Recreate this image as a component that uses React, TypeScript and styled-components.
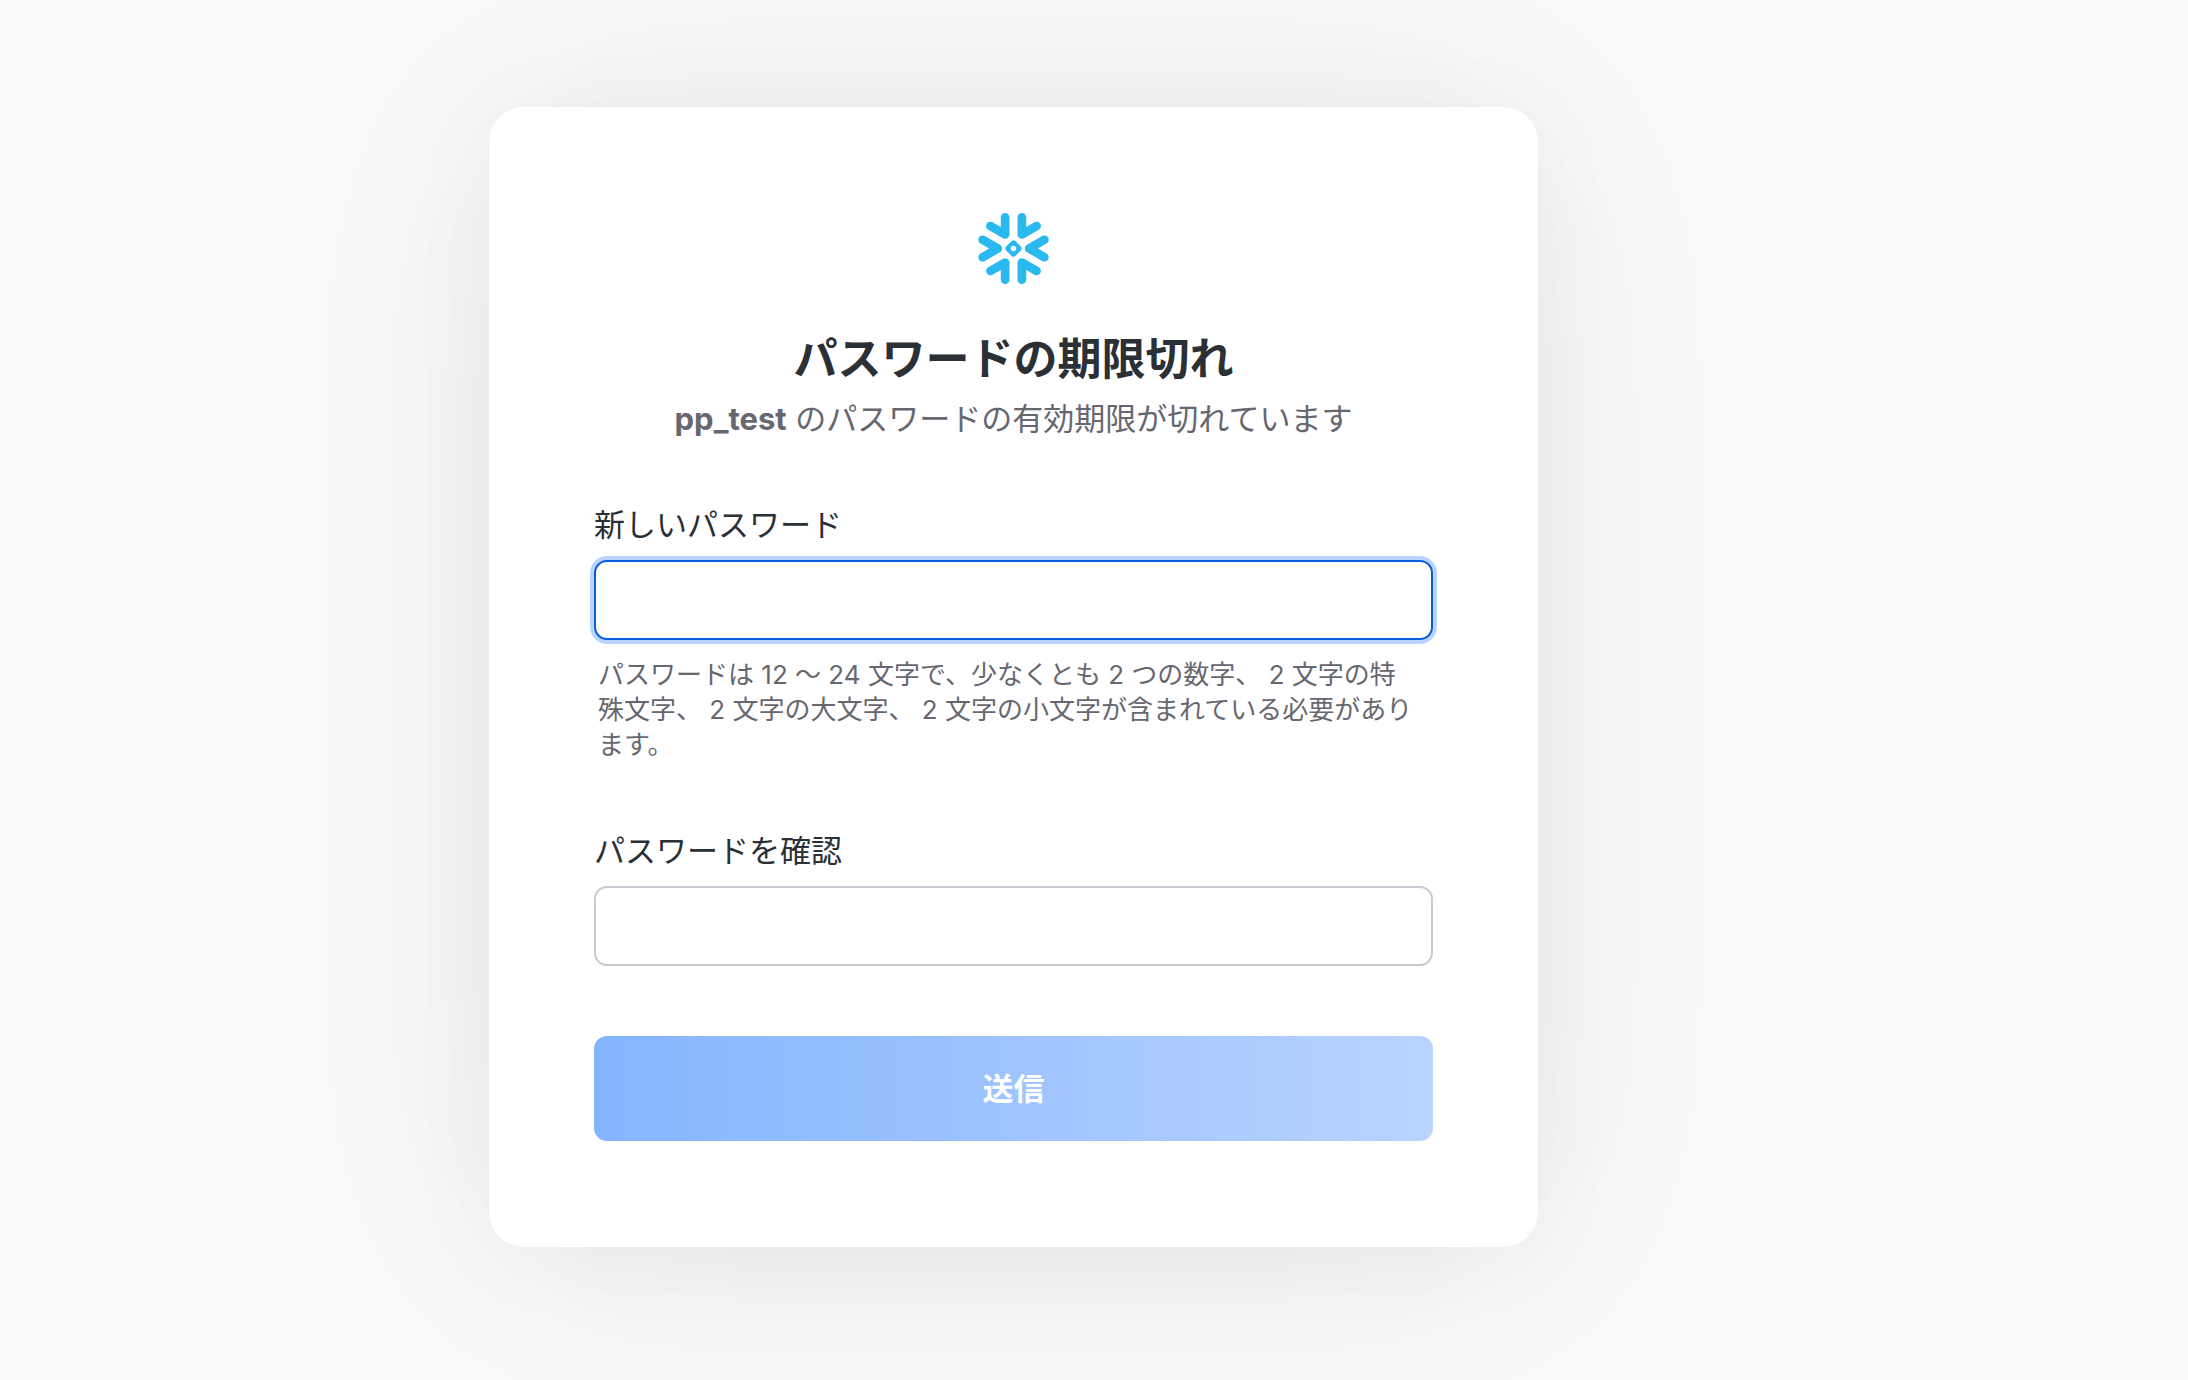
import React, { useState } from "react";
import styled, { createGlobalStyle, css } from "styled-components";

const GlobalStyle = createGlobalStyle`
  *, *::before, *::after {
    box-sizing: border-box;
  }

  body {
    margin: 0;
    background: #fafafa;
    color: #2b2f36;
    font-family: Inter, "Noto Sans CJK JP", sans-serif;
    font-size: 31px;
    line-height: 44px;
  }
`;

const Page = styled.main`
  display: flex;
  justify-content: center;
  min-height: 100vh;
  padding: 107px 161px 107px 0;
  overflow: hidden;
`;

const Card = styled.section`
  align-self: flex-start;
  width: 100%;
  max-width: 1049px;
  padding: 106px 105px;
  border-radius: 35px;
  background: #fff;
  box-shadow:
    0 9px 110px rgba(0, 0, 0, 0.03),
    0 9px 262px rgba(0, 0, 0, 0.085);
`;

const Header = styled.header`
  display: flex;
  flex-direction: column;
  align-items: center;
  text-align: center;
`;

const Logo = styled.svg`
  display: block;
  width: 71px;
  height: 71px;
`;

const Title = styled.h1`
  margin: 49px 0 12px;
  font-size: 44px;
  font-weight: 700;
  line-height: 52px;
`;

const Subtitle = styled.p`
  margin: 0;
  color: #66676f;

  strong {
    font-weight: 700;
  }
`;

const Form = styled.form`
  display: flex;
  flex-direction: column;
  gap: 70px;
  margin-top: 62px;
`;

const Field = styled.div`
  display: flex;
  flex-direction: column;
`;

const FieldSet = styled.div`
  display: flex;
  flex-direction: column;
  gap: 67px;
`;

const Label = styled.label`
  margin-bottom: 13px;
`;

const activeRing = css`
  border-color: #0b5cdc;
  box-shadow: 0 0 0 4px #b8d4ff;
`;

const Input = styled.input<{ $active?: boolean }>`
  width: 100%;
  height: 80px;
  padding: 0 24px;
  border: 2px solid #c9cad1;
  border-radius: 13px;
  outline: none;
  background: #fff;
  color: inherit;
  font: inherit;

  ${({ $active }) => $active && activeRing}

  &:focus {
    ${activeRing}
  }
`;

const Hint = styled.p`
  margin: 17px 0 0;
  padding: 0 14px 0 4px;
  color: #66676f;
  font-size: 26px;
  line-height: 35px;
`;

const SubmitButton = styled.button`
  width: 100%;
  height: 105px;
  border: 0;
  border-radius: 13px;
  background: linear-gradient(to right, #85b4ff, #b8d4ff);
  color: #fff;
  font: inherit;
  font-weight: 700;
`;

function SnowflakeLogo() {
  return (
    <Logo viewBox="56 38 212 212" role="img" aria-label="Snowflake">
      <g
        fill="none"
        stroke="#29b9ee"
        strokeWidth="26"
        strokeLinecap="round"
        strokeLinejoin="round"
      >
        <path d="M137 51V102L93 77" />
        <path d="M187 51V102L231 77" />
        <path d="M137 237V186L93 211" />
        <path d="M187 237V186L231 211" />
        <path d="M70 118L115 144L70 170" />
        <path d="M254 118L209 144L254 170" />
        <path
          d="M162 129L177 144L162 159L147 144Z"
          fill="#29b9ee"
          strokeWidth="18"
        />
      </g>
      <circle cx="162" cy="144" r="8" fill="#fff" />
    </Logo>
  );
}

export default function App() {
  const [password, setPassword] = useState("");
  const [confirmation, setConfirmation] = useState("");

  return (
    <>
      <GlobalStyle />
      <Page lang="ja">
        <Card>
          <Header>
            <SnowflakeLogo />
            <Title>パスワードの期限切れ</Title>
            <Subtitle>
              <strong>pp_test</strong> のパスワードの有効期限が切れています
            </Subtitle>
          </Header>
          <Form onSubmit={(event) => event.preventDefault()}>
            <FieldSet>
              <Field>
                <Label htmlFor="new-password">新しいパスワード</Label>
                <Input
                  id="new-password"
                  type="password"
                  aria-describedby="password-hint"
                  value={password}
                  onChange={(event) => setPassword(event.target.value)}
                  $active
                />
                <Hint id="password-hint">
                  パスワードは 12 〜 24 文字で、少なくとも 2 つの数字、 2
                  文字の特殊文字、 2 文字の大文字、 2
                  文字の小文字が含まれている必要があります。
                </Hint>
              </Field>
              <Field>
                <Label htmlFor="confirm-password">パスワードを確認</Label>
                <Input
                  id="confirm-password"
                  type="password"
                  value={confirmation}
                  onChange={(event) => setConfirmation(event.target.value)}
                />
              </Field>
            </FieldSet>
            <SubmitButton type="submit" disabled={!password || password !== confirmation}>
              送信
            </SubmitButton>
          </Form>
        </Card>
      </Page>
    </>
  );
}
